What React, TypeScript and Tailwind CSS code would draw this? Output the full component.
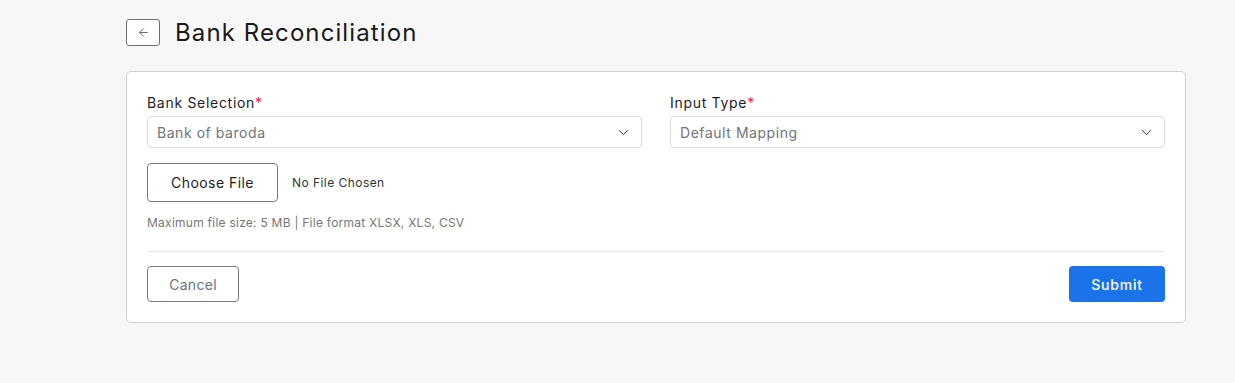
import React from 'react';
import { ArrowLeft, ChevronDown } from 'lucide-react';

const font = { fontFamily: 'Inter, "Open Sans", sans-serif' };

const SelectField = ({ label, value }: { label: string; value: string }) => (
  <div className="flex flex-col">
    <label className="text-[14px] leading-[18px] text-[#1d1d1d] mb-[4px] tracking-[0.7px]">
      {label}
      <span className="text-[#e8174d]">*</span>
    </label>
    <div className="h-[32px] border border-[#dcdcdc] rounded-[4px] flex items-center justify-between pl-[9px] pr-[9px] bg-white">
      <span className="text-[14px] text-[#70757a] tracking-[0.55px]">{value}</span>
      <ChevronDown size={17} strokeWidth={1.4} className="text-[#333]" />
    </div>
  </div>
);

export default function App() {
  return (
    <div className="min-h-[383px] bg-[#f7f7f7] pl-[126px] pr-[50px] pt-[19px]" style={font}>
      <div className="flex items-center gap-[15px] h-[27px]">
        <button className="w-[34px] h-[27px] border border-[#6f6f6f] rounded-[3px] flex items-center justify-center bg-white">
          <ArrowLeft size={13} strokeWidth={1.6} className="text-[#555]" />
        </button>
        <h1 className="text-[24px] text-[#1a1a1a] leading-none tracking-[1.1px]">Bank Reconciliation</h1>
      </div>

      <div className="mt-[25px] w-[1060px] bg-white border border-[#cfcfcf] rounded-[5px] px-[20px] pt-[22px] pb-[20px]">
        <div className="grid grid-cols-2 gap-x-[28px]">
          <SelectField label="Bank Selection" value="Bank of baroda" />
          <SelectField label="Input Type" value="Default Mapping" />
        </div>

        <div className="flex items-center mt-[15px]">
          <button className="w-[131px] h-[39px] border border-[#7a7a7a] rounded-[4px] text-[14px] text-[#1d1d1d] bg-white tracking-[0.45px]">
            Choose File
          </button>
          <span className="ml-[14px] text-[12px] text-[#333] tracking-[0.45px]">No File Chosen</span>
        </div>

        <p className="mt-[12px] text-[12px] text-[#777] tracking-[0.25px]">Maximum file size: 5 MB | File format XLSX, XLS, CSV</p>

        <div className="mt-[19px] border-t border-[#e6e6e6]" />

        <div className="flex items-center justify-between mt-[14px]">
          <button className="w-[92px] h-[36px] border border-[#7a7a7a] rounded-[4px] text-[14px] text-[#6c757d] bg-white tracking-[0.3px]">
            Cancel
          </button>
          <button className="w-[96px] h-[36px] rounded-[4px] text-[14px] font-medium text-white bg-[#1a73e8] tracking-[0.8px]">
            Submit
          </button>
        </div>
      </div>
    </div>
  );
}
